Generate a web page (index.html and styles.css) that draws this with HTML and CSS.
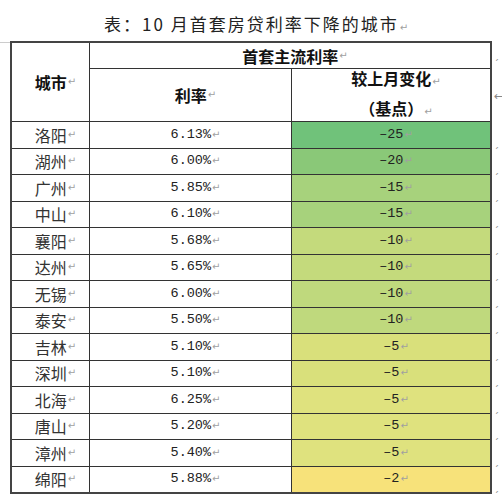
FILE: index.html
```html
<!DOCTYPE html>
<html lang="zh-CN">
<head>
    <meta charset="UTF-8">
    <meta name="viewport" content="width=device-width, initial-scale=1.0">
    <title>10月首套房贷利率下降的城市</title>
    <link rel="stylesheet" href="styles.css">
</head>
<body>
    <div class="title">表：10 月首套房贷利率下降的城市<span class="rt">↵</span></div>

    <div class="sheet">
        <div class="gutter"></div>
        <div class="rates">
            <div class="cell head span-rows">城市<span class="rt">↵</span></div>
            <div class="cell head span-cols">首套主流利率<span class="rt">↵</span></div>
            <div class="cell head">利率<span class="rt">↵</span></div>
            <div class="cell head stack">
                <div>较上月变化<span class="rt">↵</span></div>
                <div>（基点）<span class="rt">↵</span></div>
            </div>

            <div class="cell">洛阳<span class="rt">↵</span></div><div class="cell num">6.13%<span class="rt">↵</span></div><div class="cell num lv25">–25<span class="rt">↵</span></div>
            <div class="cell">湖州<span class="rt">↵</span></div><div class="cell num">6.00%<span class="rt">↵</span></div><div class="cell num lv20">–20<span class="rt">↵</span></div>
            <div class="cell">广州<span class="rt">↵</span></div><div class="cell num">5.85%<span class="rt">↵</span></div><div class="cell num lv15">–15<span class="rt">↵</span></div>
            <div class="cell">中山<span class="rt">↵</span></div><div class="cell num">6.10%<span class="rt">↵</span></div><div class="cell num lv15">–15<span class="rt">↵</span></div>
            <div class="cell">襄阳<span class="rt">↵</span></div><div class="cell num">5.68%<span class="rt">↵</span></div><div class="cell num lv10">–10<span class="rt">↵</span></div>
            <div class="cell">达州<span class="rt">↵</span></div><div class="cell num">5.65%<span class="rt">↵</span></div><div class="cell num lv10">–10<span class="rt">↵</span></div>
            <div class="cell">无锡<span class="rt">↵</span></div><div class="cell num">6.00%<span class="rt">↵</span></div><div class="cell num lv10b">–10<span class="rt">↵</span></div>
            <div class="cell">泰安<span class="rt">↵</span></div><div class="cell num">5.50%<span class="rt">↵</span></div><div class="cell num lv10b">–10<span class="rt">↵</span></div>
            <div class="cell">吉林<span class="rt">↵</span></div><div class="cell num">5.10%<span class="rt">↵</span></div><div class="cell num lv5">–5<span class="rt">↵</span></div>
            <div class="cell">深圳<span class="rt">↵</span></div><div class="cell num">5.10%<span class="rt">↵</span></div><div class="cell num lv5">–5<span class="rt">↵</span></div>
            <div class="cell">北海<span class="rt">↵</span></div><div class="cell num">6.25%<span class="rt">↵</span></div><div class="cell num lv5b">–5<span class="rt">↵</span></div>
            <div class="cell">唐山<span class="rt">↵</span></div><div class="cell num">5.20%<span class="rt">↵</span></div><div class="cell num lv5b">–5<span class="rt">↵</span></div>
            <div class="cell">漳州<span class="rt">↵</span></div><div class="cell num">5.40%<span class="rt">↵</span></div><div class="cell num lv5b">–5<span class="rt">↵</span></div>
            <div class="cell">绵阳<span class="rt">↵</span></div><div class="cell num">5.88%<span class="rt">↵</span></div><div class="cell num lv2">–2<span class="rt">↵</span></div>
        </div>
        <div class="marks">
            <div class="m-hd1">ˏ</div>
            <div class="m-hd2">←</div>
            <div class="m-row">ˏ</div>
            <div class="m-row">ˏ</div>
            <div class="m-row">ˏ</div>
            <div class="m-row">ˏ</div>
            <div class="m-row">ˏ</div>
            <div class="m-row">ˏ</div>
            <div class="m-row">ˏ</div>
            <div class="m-row">ˏ</div>
            <div class="m-row">ˏ</div>
            <div class="m-row">ˏ</div>
            <div class="m-row">ˏ</div>
            <div class="m-row">ˏ</div>
            <div class="m-row">ˏ</div>
            <div class="m-row">ˏ</div>
        </div>
    </div>
</body>
</html>
```

FILE: styles.css
```css
body {
    margin: 0;
    background-color: #ffffff;
    font-family: "Noto Sans CJK SC", sans-serif;
    color: #333333;
}

.title {
    height: 41px;
    box-sizing: border-box;
    padding: 11px 0 0 10px;
    text-align: center;
    font-size: 17px;
    line-height: 26px;
    letter-spacing: 2px;
    color: #222222;
}

.rt {
    font-family: "DejaVu Sans", sans-serif;
    font-size: 10px;
    font-weight: normal;
    letter-spacing: 0;
    color: #a0a0a0;
    margin-left: 1px;
}

.sheet {
    display: flex;
    align-items: flex-start;
}

.gutter {
    width: 10px;
    flex: none;
    margin-top: 1px;
    border-top: 1px solid #cccccc;
}

/* table drawn as a grid: the dark background shows through the 1px gaps */
.rates {
    flex: none;
    display: grid;
    grid-template-columns: 77px 201px 198px;
    grid-template-rows: 25px 52px repeat(14, 25.5px);
    gap: 1px;
    background-color: #333333;
    border: 2px solid #444444;
}

.cell {
    display: flex;
    align-items: center;
    justify-content: center;
    padding-left: 10px;
    background-color: #ffffff;
    font-size: 16px;
    line-height: 20px;
}

.head {
    font-weight: bold;
    color: #111111;
}

.span-rows { grid-row: span 2; }
.span-cols { grid-column: span 2; }

.stack {
    flex-direction: column;
    line-height: 26px;
}

.num {
    font-family: "Liberation Mono", monospace;
    font-size: 13.5px;
    color: #222222;
}

.lv25 { background-color: #70c27a; }
.lv20 { background-color: #8ac878; }
.lv15 { background-color: #a7d27c; }
.lv10 { background-color: #c4da7c; }
.lv10b { background-color: #bfd97d; }
.lv5 { background-color: #d9e07b; }
.lv5b { background-color: #dfe27e; }
.lv2 { background-color: #f7e27a; }

.marks {
    flex: none;
    width: 10px;
    display: flex;
    flex-direction: column;
    font-family: "DejaVu Sans", sans-serif;
    font-size: 10px;
    line-height: 12px;
    color: #888888;
}

.marks div {
    display: flex;
    padding-left: 2px;
}

.m-hd1 {
    height: 28px;
    align-items: center;
}

.m-hd2 {
    height: 53px;
    align-items: center;
    font-size: 12px;
}

.m-row {
    height: 26.5px;
    align-items: flex-end;
}
```
